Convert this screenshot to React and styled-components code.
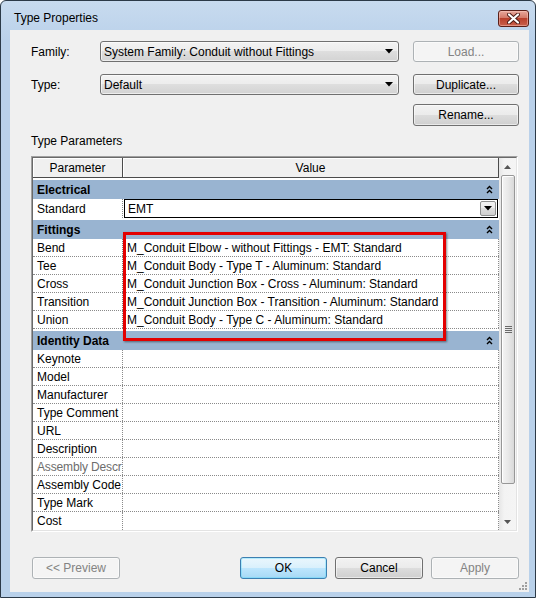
import React from 'react';
import styled, { createGlobalStyle, css } from 'styled-components';

const GlobalStyle = createGlobalStyle`
  html, body {
    margin: 0;
    padding: 0;
    background: #fff;
  }
  body {
    font-family: 'Liberation Sans', Arial, sans-serif;
    font-size: 12px;
    color: #000;
  }
  * {
    box-sizing: border-box;
  }
`;

const WindowStyled = styled.div`
  width: 536px;
  height: 598px;
  border: 1px solid #2c3a48;
  border-radius: 6px 6px 0 0;
  background: linear-gradient(#c8dbef, #bad1ea 40px, #b9d1ea);
  display: flex;
  flex-direction: column;
`;

const TitleBar = styled.div`
  height: 29px;
  flex: none;
  display: flex;
  justify-content: space-between;
  align-items: flex-start;
  padding: 9px 6px 0 13px;
  line-height: 17px;
`;

const CloseButton = styled.div`
  width: 31px;
  height: 17px;
  border: 1px solid #5a1f18;
  border-radius: 3px;
  background: linear-gradient(#e8a89c, #d47a69 45%, #b9402c 50%, #c9604c);
  box-shadow: inset 0 0 0 1px rgba(255, 210, 200, 0.45);
  display: flex;
  align-items: center;
  justify-content: center;
`;

const Client = styled.div`
  flex: 1;
  margin: 0 6px 5px 9px;
  background: #f0f0f0;
  padding: 11px 10px 0 21px;
  display: flex;
  flex-direction: column;
  position: relative;
`;

const FormRow = styled.div`
  display: flex;
  align-items: center;
  height: ${(p) => p.$h || 21}px;
  margin-top: ${(p) => p.$mt || 0}px;
  justify-content: ${(p) => (p.$end ? 'flex-end' : 'flex-start')};
`;

const Label = styled.div`
  width: 69px;
`;

const Combo = styled.div`
  width: 299px;
  height: 21px;
  border: 1px solid #707070;
  border-radius: 3px;
  background: linear-gradient(#f3f3f3, #ececec 50%, #dedede 50%, #d3d3d3);
  box-shadow: inset 0 0 0 1px rgba(255, 255, 255, 0.6);
  padding: 0 5px 0 3px;
  display: flex;
  align-items: center;
  justify-content: space-between;
`;

const buttonLook = {
  normal: css`
    border-color: #707070;
    background: linear-gradient(#f2f2f2, #ebebeb 50%, #dddddd 50%, #cfcfcf);
    color: #000;
  `,
  disabled: css`
    border-color: #adb2b5;
    background: #f4f4f4;
    color: #838383;
  `,
  default: css`
    border-color: #3c7fb1;
    background: linear-gradient(#eaf6fd, #d9f0fc 50%, #bee6fd 50%, #a7d9f5);
    box-shadow: inset 0 0 0 1px #48d8fb55;
    color: #000;
  `,
};

const Button = styled.div`
  width: ${(p) => p.$w}px;
  height: ${(p) => p.$h || 22}px;
  margin-left: ${(p) => p.$ml || 0}px;
  border: 1px solid;
  border-radius: 3px;
  display: flex;
  align-items: center;
  justify-content: center;
  box-shadow: inset 0 0 0 1px rgba(255, 255, 255, 0.55);
  ${(p) => buttonLook[p.$variant || 'normal']}
`;

const SectionLabel = styled.div`
  margin-top: 7px;
  line-height: 16px;
`;

const TableFrame = styled.div`
  margin-top: 7px;
  width: 487px;
  border: 1px solid;
  border-color: #a0a0a0 #ffffff #ffffff #a0a0a0;
`;

const TableInner = styled.div`
  display: flex;
  border: 1px solid;
  border-color: #696969 #e3e3e3 #e3e3e3 #696969;
`;

const Grid = styled.div`
  width: 466px;
  flex: none;
  background: #fff;
  position: relative;
`;

const HeaderRow = styled.div`
  display: flex;
  height: 20px;
`;

const HeadCell = styled.div`
  width: ${(p) => (p.$w ? `${p.$w}px` : 'auto')};
  flex: ${(p) => (p.$w ? 'none' : 1)};
  background: #f0f0f0;
  border-right: 1px solid #4b4b4b;
  border-bottom: 1px solid #4b4b4b;
  box-shadow: inset 1px 1px #ffffff;
  display: flex;
  align-items: center;
  justify-content: center;
`;

const GroupRow = styled.div`
  height: 21px;
  border-top: 2px solid #fff;
  background: #99b4d1;
  font-weight: bold;
  display: flex;
  align-items: center;
  justify-content: space-between;
  padding: 0 6px 0 4px;
`;

const DataRow = styled.div`
  display: flex;
  height: ${(p) => p.$h || 18}px;
  border-bottom: ${(p) => (p.$plain ? 'none' : '1px dotted #8a8a8a')};
`;

const ParamCell = styled.div`
  width: 90px;
  flex: none;
  padding-left: 4px;
  border-right: 1px dotted #8a8a8a;
  white-space: nowrap;
  overflow: hidden;
  display: flex;
  align-items: center;
  color: ${(p) => (p.$muted ? '#6d6d6d' : '#000')};
  letter-spacing: ${(p) => (p.$muted ? '-0.15px' : 'normal')};
`;

const ValueCell = styled.div`
  flex: 1;
  padding-left: 4px;
  border-right: 1px dotted #8a8a8a;
  white-space: nowrap;
  overflow: hidden;
  display: flex;
  align-items: center;
`;

const EditBox = styled.div`
  flex: 1;
  margin-left: 1px;
  margin-right: 1px;
  border: 1px solid #000;
  padding-left: 3px;
  display: flex;
  align-items: center;
  justify-content: space-between;
`;

const DropButton = styled.div`
  width: 16px;
  height: 15px;
  margin-right: 1px;
  border: 1px solid #8e8f8f;
  border-radius: 2px;
  background: linear-gradient(#f2f2f2, #ebebeb 50%, #dddddd 50%, #cfcfcf);
  display: flex;
  align-items: center;
  justify-content: center;
`;

const Highlight = styled.div`
  position: absolute;
  left: 90px;
  top: 74px;
  width: 323px;
  height: 109px;
  border: 3px solid #e30000;
  box-shadow: 1px 1px 2px rgba(0, 0, 0, 0.45);
  pointer-events: none;
`;

const Scrollbar = styled.div`
  width: 17px;
  flex: none;
  display: flex;
  flex-direction: column;
  background: linear-gradient(to right, #e6e6e6, #f3f3f3 30%, #f5f5f5);
`;

const ScrollArrow = styled.div`
  height: 17px;
  flex: none;
  display: flex;
  align-items: center;
  justify-content: center;
`;

const ScrollTrack = styled.div`
  flex: 1;
  display: flex;
  flex-direction: column;
`;

const Thumb = styled.div`
  height: ${(p) => p.$h}px;
  margin: 0 1px 0 2px;
  border: 1px solid #979797;
  border-radius: 2px;
  background: linear-gradient(to right, #f4f4f4, #e9e9e9 50%, #d9d9d9);
  box-shadow: inset 1px 1px #fff;
  display: flex;
  align-items: center;
  justify-content: center;
`;

const BottomRow = styled.div`
  margin-top: 25px;
  display: flex;
  align-items: center;
  padding-left: 1px;
`;

const Spacer = styled.div`
  flex: 1;
`;

const ResizeGrip = styled.svg`
  position: absolute;
  right: 2px;
  bottom: 2px;
`;

const ComboArrow = () => (
  <svg width='8' height='5' viewBox='0 0 8 5'>
    <path d='M0 0 H8 L4 4.5 Z' fill='#000' />
  </svg>
);

const Collapse = () => (
  <svg width='7' height='9' viewBox='0 0 7 9'>
    <path
      d='M1 4 L3.5 1.5 L6 4 M1 8 L3.5 5.5 L6 8'
      fill='none'
      stroke='#000'
      strokeWidth='1.4'
    />
  </svg>
);

const CloseGlyph = () => (
  <svg width='13' height='11' viewBox='0 0 13 11'>
    <path
      d='M2 1.5 L11 9.5 M11 1.5 L2 9.5'
      stroke='#4a1a14'
      strokeWidth='4'
      strokeLinecap='round'
    />
    <path
      d='M2 1.5 L11 9.5 M11 1.5 L2 9.5'
      stroke='#fff'
      strokeWidth='2.2'
      strokeLinecap='round'
    />
  </svg>
);

const groups = [
  {
    name: 'Electrical',
    rows: [{ param: 'Standard', edit: 'EMT' }],
  },
  {
    name: 'Fittings',
    rows: [
      { param: 'Bend', value: 'M_Conduit Elbow - without Fittings - EMT: Standard' },
      { param: 'Tee', value: 'M_Conduit Body - Type T - Aluminum: Standard' },
      { param: 'Cross', value: 'M_Conduit Junction Box - Cross - Aluminum: Standard' },
      { param: 'Transition', value: 'M_Conduit Junction Box - Transition - Aluminum: Standard' },
      { param: 'Union', value: 'M_Conduit Body - Type C - Aluminum: Standard' },
    ],
  },
  {
    name: 'Identity Data',
    rows: [
      { param: 'Keynote' },
      { param: 'Model' },
      { param: 'Manufacturer' },
      { param: 'Type Comment' },
      { param: 'URL' },
      { param: 'Description' },
      // the column is too narrow, Revit shows it cut like this
      { param: 'Assembly Descr', muted: true },
      { param: 'Assembly Code' },
      { param: 'Type Mark' },
      { param: 'Cost', last: true },
    ],
  },
];

const App = () => {
  return (
    <>
      <GlobalStyle />
      <WindowStyled>
        <TitleBar>
          <span>Type Properties</span>
          <CloseButton>
            <CloseGlyph />
          </CloseButton>
        </TitleBar>
        <Client>
          <FormRow>
            <Label>Family:</Label>
            <Combo>
              <span>System Family: Conduit without Fittings</span>
              <ComboArrow />
            </Combo>
            <Button $w={106} $h={21} $ml={14} $variant='disabled'>
              Load...
            </Button>
          </FormRow>
          <FormRow $mt={12}>
            <Label>Type:</Label>
            <Combo>
              <span>Default</span>
              <ComboArrow />
            </Combo>
            <Button $w={106} $h={21} $ml={14}>
              Duplicate...
            </Button>
          </FormRow>
          <FormRow $mt={9} $h={22} $end>
            <Button $w={106}>Rename...</Button>
          </FormRow>

          <SectionLabel>Type Parameters</SectionLabel>
          <TableFrame>
            <TableInner>
              <Grid>
                <HeaderRow>
                  <HeadCell $w={90}>Parameter</HeadCell>
                  <HeadCell>Value</HeadCell>
                </HeaderRow>
                {groups.map((group) => (
                  <React.Fragment key={group.name}>
                    <GroupRow>
                      <span>{group.name}</span>
                      <Collapse />
                    </GroupRow>
                    {group.rows.map((row) =>
                      row.edit ? (
                        <DataRow key={row.param} $h={19} $plain>
                          <ParamCell>{row.param}</ParamCell>
                          <EditBox>
                            <span>{row.edit}</span>
                            <DropButton>
                              <ComboArrow />
                            </DropButton>
                          </EditBox>
                        </DataRow>
                      ) : (
                        <DataRow key={row.param} $plain={row.last}>
                          <ParamCell $muted={row.muted}>{row.param}</ParamCell>
                          <ValueCell>{row.value}</ValueCell>
                        </DataRow>
                      )
                    )}
                  </React.Fragment>
                ))}
                <Highlight />
              </Grid>
              <Scrollbar>
                <ScrollArrow>
                  <svg width='7' height='4' viewBox='0 0 7 4'>
                    <path d='M0 4 L3.5 0 L7 4 Z' fill='#555' />
                  </svg>
                </ScrollArrow>
                <ScrollTrack>
                  <Thumb $h={309}>
                    <svg width='7' height='7' viewBox='0 0 7 7'>
                      <path d='M0 0.5 H7 M0 2.5 H7 M0 4.5 H7 M0 6.5 H7' stroke='#6a6a6a' strokeWidth='1' />
                    </svg>
                  </Thumb>
                </ScrollTrack>
                <ScrollArrow>
                  <svg width='7' height='4' viewBox='0 0 7 4'>
                    <path d='M0 0 L3.5 4 L7 0 Z' fill='#555' />
                  </svg>
                </ScrollArrow>
              </Scrollbar>
            </TableInner>
          </TableFrame>

          <BottomRow>
            <Button $w={88} $variant='disabled'>
              &lt;&lt; Preview
            </Button>
            <Spacer />
            <Button $w={87} $variant='default'>
              OK
            </Button>
            <Button $w={88} $ml={8}>
              Cancel
            </Button>
            <Button $w={88} $ml={8} $variant='disabled'>
              Apply
            </Button>
          </BottomRow>

          <ResizeGrip width='9' height='9' viewBox='0 0 9 9'>
            <g fill='#a0a0a0'>
              <rect x='7' y='1' width='2' height='2' />
              <rect x='4' y='4' width='2' height='2' />
              <rect x='7' y='4' width='2' height='2' />
              <rect x='1' y='7' width='2' height='2' />
              <rect x='4' y='7' width='2' height='2' />
              <rect x='7' y='7' width='2' height='2' />
            </g>
          </ResizeGrip>
        </Client>
      </WindowStyled>
    </>
  );
};

export default App;
